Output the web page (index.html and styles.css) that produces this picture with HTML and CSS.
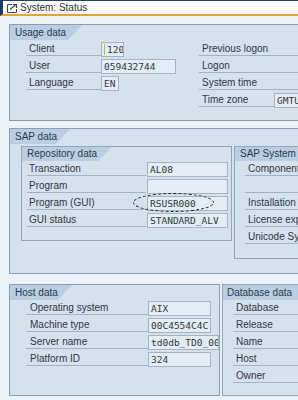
FILE: index.html
```html
<!DOCTYPE html>
<html lang="en">
<head>
  <meta charset="UTF-8">
  <title>System: Status</title>
  <link rel="stylesheet" href="styles.css">
</head>
<body>
  <div class="titlebar">
    <svg class="title-icon" width="11" height="10" viewBox="0 0 11 10">
      <path d="M5 1.5H0.5V9.5H9.5V6" fill="none" stroke="#3a4656" stroke-width="1"/>
      <path d="M3 6.5L8.5 2 M6 1.5H9.5V5" fill="none" stroke="#3a4656" stroke-width="1.2"/>
    </svg>
    <span class="title">System: Status</span>
  </div>
  <div class="toolbar"></div>

  <div class="screen">
    <section class="group group-wide">
      <div class="tab tab-usage">Usage data</div>
      <div class="usage-cols">
        <div class="rows col-left">
          <div class="row">
            <span class="label">Client</span>
            <span class="field w-client"><i class="caret"></i>120</span>
          </div>
          <div class="row">
            <span class="label">User</span>
            <span class="field w-user">059432744</span>
          </div>
          <div class="row">
            <span class="label">Language</span>
            <span class="field w-lang">EN</span>
          </div>
        </div>
        <div class="rows col-right">
          <div class="row"><span class="label label-wide">Previous logon</span></div>
          <div class="row"><span class="label label-wide">Logon</span></div>
          <div class="row"><span class="label label-wide">System time</span></div>
          <div class="row">
            <span class="label">Time zone</span>
            <span class="field w-zone">GMTUK</span>
          </div>
        </div>
      </div>
    </section>

    <section class="group group-wide group-sap">
      <div class="tab tab-sap">SAP data</div>
      <div class="subgroups">
        <section class="box box-repo">
          <div class="tab tab-repo">Repository data</div>
          <div class="rows">
            <div class="row">
              <span class="label">Transaction</span>
              <span class="field w-repo">AL08</span>
            </div>
            <div class="row">
              <span class="label">Program</span>
              <span class="field w-repo"></span>
            </div>
            <div class="row">
              <span class="label">Program (GUI)</span>
              <span class="field w-repo marked">RSUSR000<i class="ellipse"></i></span>
            </div>
            <div class="row">
              <span class="label">GUI status</span>
              <span class="field w-repo">STANDARD_ALV</span>
            </div>
          </div>
        </section>
        <section class="box box-side">
          <div class="box-head">SAP System</div>
          <div class="rows">
            <div class="row"><span class="label">Component version</span></div>
            <div class="row"><span class="label label-blank"></span></div>
            <div class="row"><span class="label">Installation number</span></div>
            <div class="row"><span class="label">License expires on</span></div>
            <div class="row"><span class="label">Unicode System</span></div>
          </div>
        </section>
      </div>
    </section>

    <div class="bottom-groups">
      <section class="group group-host">
        <div class="tab tab-host">Host data</div>
        <div class="rows">
          <div class="row">
            <span class="label">Operating system</span>
            <span class="field w-host">AIX</span>
          </div>
          <div class="row">
            <span class="label">Machine type</span>
            <span class="field w-host">00C4554C4C</span>
          </div>
          <div class="row">
            <span class="label">Server name</span>
            <span class="field w-server">td0db_TD0_00</span>
          </div>
          <div class="row">
            <span class="label">Platform ID</span>
            <span class="field w-host">324</span>
          </div>
        </div>
      </section>
      <section class="box box-db">
        <div class="box-head">Database data</div>
        <div class="rows">
          <div class="row"><span class="label">Database</span></div>
          <div class="row"><span class="label">Release</span></div>
          <div class="row"><span class="label">Name</span></div>
          <div class="row"><span class="label">Host</span></div>
          <div class="row"><span class="label">Owner</span></div>
        </div>
      </section>
    </div>
  </div>
</body>
</html>
```

FILE: styles.css
```css
html,
body {
  margin: 0;
  padding: 0;
  overflow: hidden;
}

body {
  width: 298px;
  height: 400px;
  background: #edf2f7;
  font-family: "Liberation Sans", Arial, sans-serif;
  font-size: 10px;
  color: #2f3742;
}

/* window title */
.titlebar {
  height: 13px;
  border-top: 1px solid #2c3f58;
  border-left: 3px solid #1d3b64;
  border-bottom: 2px solid #efa035;
  background: #fbfcfd;
  display: flex;
  align-items: center;
  padding-left: 4px;
  gap: 2px;
}

.title-icon {
  display: block;
  flex-shrink: 0;
}

.title {
  color: #333;
  line-height: 13px;
}

.toolbar {
  height: 8px;
  background: #eff2f5;
}

.screen {
  padding-left: 9px;
}

/* group boxes */
.group {
  box-sizing: border-box;
  background: #d5e1ed;
  border: 1px solid #869db6;
}

.group-wide {
  width: 330px;
  padding-bottom: 12px;
}

.group-sap {
  margin-top: 7px;
  padding-bottom: 14px;
}

.tab {
  height: 15px;
  line-height: 15px;
  padding-left: 5px;
  box-sizing: border-box;
  background: #b9cee2;
  color: #2a3a4c;
  clip-path: polygon(0 0, 100% 0, calc(100% - 14px) 100%, 0 100%);
}

.tab-usage { width: 72px; }
.tab-sap { width: 60px; }
.tab-host { width: 62px; }
.tab-repo {
  width: 90px;
  height: 14px;
  line-height: 14px;
}

.rows {
  display: flex;
  flex-direction: column;
  gap: 2px;
  margin-top: 1px;
}

.row {
  display: flex;
  height: 15px;
}

.label {
  box-sizing: border-box;
  height: 14px;
  line-height: 13px;
  border-bottom: 1px solid #a0b4c8;
  white-space: nowrap;
  overflow: hidden;
  flex-shrink: 0;
}

.field {
  box-sizing: border-box;
  height: 15px;
  line-height: 13px;
  padding-left: 2px;
  border: 1px solid #a5b4c4;
  background: #e5ecf3;
  font-family: "DejaVu Sans Mono", "Liberation Mono", monospace;
  font-size: 9.5px;
  color: #303840;
  white-space: nowrap;
  overflow: hidden;
  flex-shrink: 0;
}

/* usage data */
.usage-cols {
  display: flex;
  margin-top: 2px;
}

.usage-cols .rows {
  margin-top: 0;
}

.col-left {
  width: 173px;
  margin-left: 16px;
}

.col-left .label,
.col-right .label {
  width: 75px;
  padding-left: 3px;
}

.col-right .label-wide {
  width: 130px;
}

.w-client {
  width: 23px;
  display: flex;
  align-items: center;
  gap: 2px;
}

.caret {
  display: block;
  width: 1px;
  height: 11px;
  background: #6b5a1a;
  border-right: 1px solid #c9b24a;
}

.w-user { width: 75px; }
.w-lang { width: 18px; }
.w-zone { width: 40px; }

/* SAP data */
.subgroups {
  display: flex;
  align-items: flex-start;
  gap: 2px;
  margin: 2px 0 0 11px;
}

.box {
  box-sizing: border-box;
  background: #d5e1ed;
  border: 1px solid #8fa6bd;
}

.box-repo {
  width: 211px;
  padding-bottom: 12px;
}

.box-repo .label {
  width: 119px;
  margin-left: 5px;
  padding-left: 2px;
}

.w-repo {
  width: 81px;
  margin-left: 1px;
}

.marked {
  position: relative;
  overflow: visible;
}

.ellipse {
  position: absolute;
  left: -15px;
  top: -4px;
  width: 79px;
  height: 17px;
  border: 1px dashed #1e1e1e;
  border-radius: 50%;
}

.box-head {
  height: 14px;
  line-height: 14px;
  padding-left: 5px;
  background: #b9cee2;
  color: #2a3a4c;
  white-space: nowrap;
}

.box-side {
  width: 100px;
  padding-bottom: 13px;
}

.box-side .label,
.box-db .label {
  width: 120px;
  margin-left: 10px;
  padding-left: 3px;
}

/* host + database */
.bottom-groups {
  display: flex;
  align-items: flex-start;
  gap: 2px;
  margin-top: 10px;
}

.group-host {
  width: 224px;
  padding-bottom: 28px;
}

.group-host .label {
  width: 122px;
  margin-left: 16px;
  padding-left: 4px;
}

.w-host { width: 63px; }
.w-server { width: 71px; }

.box-db {
  width: 100px;
  padding-bottom: 11px;
}

.box-db .box-head {
  height: 15px;
  line-height: 15px;
  padding-left: 4px;
}
```
